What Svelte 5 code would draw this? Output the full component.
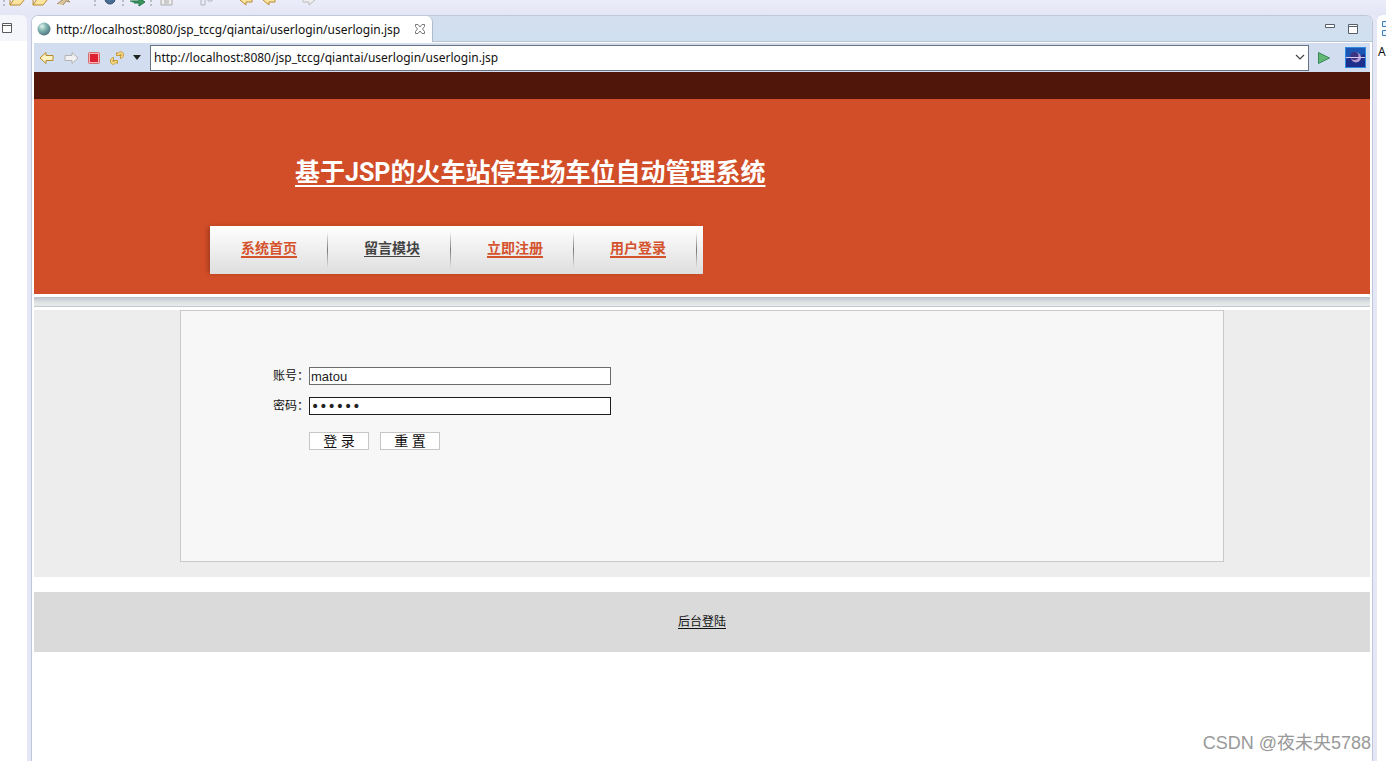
<script lang="ts">
  const pageUrl = 'http://localhost:8080/jsp_tccg/qiantai/userlogin/userlogin.jsp';

  const links = [
    { label: '系统首页', active: false },
    { label: '留言模块', active: true },
    { label: '立即注册', active: false },
    { label: '用户登录', active: false }
  ];

  let address = $state(pageUrl);
  let account = $state('matou');
  let password = $state('123456');

  function reset() {
    account = '';
    password = '';
  }
</script>

<div class="workbench">
  <div class="main-toolbar">
    <!-- the toolbar is scrolled up, so only the feet of its icons show -->
    <svg width="330" height="9" viewBox="0 0 330 9" aria-hidden="true">
      <g fill="#fbe3a0" stroke="#b98a2e">
        <path d="M10 -3V5H20L25 -1H14L10 5" />
        <path d="M33 -3V5H43L48 -1H37L33 5" />
        <path d="M246 -5L240 0L246 5V2H252V-2H246Z" />
        <path d="M269 -5L263 0L269 5V2H275V-2H269Z" />
      </g>
      <path d="M57 4L65 -2L70 2L66 1L63 5" fill="#dcc49a" stroke="#a48e68" />
      <circle cx="110" cy="-1" r="5" fill="#4a6f94" stroke="#2f4668" />
      <path d="M130 1H139V-2L145 2L139 6V3H134" fill="#38985c" stroke="#257549" />
      <path d="M161 -2V5H172V-2M164 1H169M164 3H169" fill="#eee" stroke="#aaa" />
      <path d="M201 -2V5H205V-2M208 -2V1H212V-2" fill="none" stroke="#b5b5bd" />
      <path d="M309 -5L315 0L309 5V2H303V-2H309Z" fill="#eee" stroke="#bbb" />
      <path d="M4 0V6M95 0V6M123 0V6M151 0V6" stroke="#8d8d99" stroke-dasharray="2 2" />
    </svg>
  </div>

  <div class="panes">
    <aside class="side left">
      <button type="button" class="icon-button" aria-label="Restore left view">
        <svg width="12" height="12" viewBox="0 0 12 12">
          <path d="M1.500 1.500H10.500V10.500H1.500ZM1.500 3.500H10.500" fill="#fff" stroke="#5b5b5b" />
        </svg>
      </button>
    </aside>

    <section class="editor">
      <div class="tab-strip">
        <div class="tab">
          <svg width="14" height="14" viewBox="0 0 14 14" aria-hidden="true">
            <defs>
              <radialGradient id="globe" cx="0.35" cy="0.3" r="0.75">
                <stop offset="0" stop-color="#e4f3ee" />
                <stop offset="0.45" stop-color="#80b4ae" />
                <stop offset="1" stop-color="#4f6f80" />
              </radialGradient>
            </defs>
            <circle cx="7" cy="7" r="6.500" fill="url(#globe)" />
          </svg>
          <span>{pageUrl}</span>
          <button type="button" class="icon-button" aria-label="Close tab">
            <svg width="12" height="12" viewBox="0 0 12 12">
              <path
                d="M1.500 1.500H4L6 4L8 1.500H10.500V3.500L8.500 6L10.500 8.500V10.500H8L6 8L4 10.500H1.500V8.500L3.500 6L1.500 3.500Z"
                fill="#fff"
                stroke="#777"
              />
            </svg>
          </button>
        </div>
        <div class="window-buttons">
          <button type="button" class="icon-button" aria-label="Minimize">
            <svg width="12" height="12" viewBox="0 0 12 12">
              <path d="M1.500 1.500H10.500V4.500H1.500Z" fill="#fff" stroke="#555f6b" />
            </svg>
          </button>
          <button type="button" class="icon-button" aria-label="Maximize">
            <svg width="12" height="12" viewBox="0 0 12 12">
              <path d="M1.500 1.500H10.500V10.500H1.500ZM1.500 3.500H10.500" fill="#fff" stroke="#555f6b" />
            </svg>
          </button>
        </div>
      </div>

      <div class="browser-bar">
        <div class="browser-tools">
          <button type="button" class="icon-button" aria-label="Back">
            <svg width="16" height="14" viewBox="0 0 16 14">
              <path d="M1 7L7 1.500V4.500H14V9.500H7V12.500Z" fill="#fff3c4" stroke="#b58a2a" />
            </svg>
          </button>
          <button type="button" class="icon-button" aria-label="Forward">
            <svg width="16" height="14" viewBox="0 0 16 14">
              <path d="M15 7L9 1.500V4.500H2V9.500H9V12.500Z" fill="#f1f1f1" stroke="#b4b4b4" />
            </svg>
          </button>
          <button type="button" class="icon-button" aria-label="Stop">
            <svg width="14" height="14" viewBox="0 0 14 14">
              <rect x="1.500" y="1.500" width="11" height="11" rx="1" fill="#f3b7b7" stroke="#d66a70" />
              <rect x="3" y="3" width="8" height="8" fill="#dd1f31" />
            </svg>
          </button>
          <button type="button" class="icon-button" aria-label="Refresh">
            <svg width="16" height="16" viewBox="0 0 16 16">
              <g fill="#fbdc84" stroke="#c29a40">
                <path d="M7.500 5.500V2.500L9 3.500C11 0.500 14.500 1.500 14.500 5C14.500 7 13 8.500 11.500 8.500V6.500C13 6 12.500 3.500 10.800 4.500L12 5.500Z" />
                <path d="M8.500 10.500V13.500L7 12.500C5 15.500 1.500 14.500 1.500 11C1.500 9 3 7.500 4.500 7.500V9.500C3 10 3.500 12.500 5.200 11.500L4 10.500Z" />
              </g>
            </svg>
          </button>
          <button type="button" class="icon-button" aria-label="Refresh options">
            <svg width="8" height="5" viewBox="0 0 8 5"><path d="M0 0H8L4 5Z" fill="#222" /></svg>
          </button>
        </div>
        <div class="address">
          <input type="text" aria-label="Address" bind:value={address} />
          <button type="button" class="icon-button" aria-label="Show history">
            <svg width="10" height="7" viewBox="0 0 10 7">
              <path d="M1 1L5 5L9 1" fill="none" stroke="#444" stroke-width="1.200" />
            </svg>
          </button>
        </div>
        <button type="button" class="icon-button" aria-label="Go">
          <svg width="14" height="14" viewBox="0 0 14 14">
            <path d="M1.500 1.500L12.500 7L1.500 12.500Z" fill="#62b873" stroke="#36895a" />
          </svg>
        </button>
        <svg class="brand" width="21" height="21" viewBox="0 0 21 21" aria-hidden="true">
          <rect width="21" height="21" fill="#2f8be0" />
          <rect x="1" y="1" width="19" height="19" fill="#1d55b4" />
          <path d="M1 20V12L20 7V20Z" fill="#1d2f8a" />
          <circle cx="11" cy="10.500" r="5" fill="#b49bd4" />
          <circle cx="9.500" cy="9" r="4" fill="#3c3480" />
          <path d="M1 10.500H20" stroke="#d9c8f0" />
        </svg>
      </div>

      <main class="site">
        <div class="top-band"></div>
        <header>
          <div class="container">
            <h1><a href="#home">基于JSP的火车站停车场车位自动管理系统</a></h1>
            <nav>
              {#each links as link (link.label)}
                <div class="nav-item">
                  <a href="#{link.label}" class:active={link.active}>{link.label}</a>
                </div>
              {/each}
            </nav>
          </div>
        </header>
        <div class="divider"></div>

        <div class="content">
          <div class="panel">
            <form onsubmit={(event) => event.preventDefault()}>
              <label for="account">账号：</label>
              <input id="account" type="text" bind:value={account} />
              <label for="password">密码：</label>
              <input id="password" type="password" bind:value={password} />
              <div class="actions">
                <button type="submit">登 录</button>
                <button type="button" onclick={reset}>重 置</button>
              </div>
            </form>
          </div>
        </div>

        <footer><a href="#admin">后台登陆</a></footer>
      </main>
    </section>

    <aside class="side right">
      <svg width="12" height="18" viewBox="0 0 12 18" aria-hidden="true">
        <path d="M1.500 1.500H6.500V6.500H1.500ZM1.500 10.500H6.500V15.500H1.500Z" fill="#e8f3fd" stroke="#3b7db8" />
      </svg>
      <span>A</span>
    </aside>
  </div>

  <div class="watermark">CSDN @夜未央5788</div>
</div>

<style>
  :global(body) {
    margin: 0;
    overflow: hidden;
  }

  .workbench {
    display: flex;
    flex-direction: column;
    min-height: 100vh;
    background: #e6e7f6;
    color: #111;
    font-family: 'Noto Sans', 'Noto Sans CJK SC', sans-serif;
    font-size: 12px;
  }

  .workbench *,
  .workbench {
    box-sizing: border-box;
  }

  svg {
    display: block;
    flex: none;
  }

  .main-toolbar {
    height: 15px;
    background: linear-gradient(#ececfa, #e4e6f5);
  }

  .icon-button {
    display: flex;
    align-items: center;
    justify-content: center;
    padding: 0;
    border: 0;
    background: none;
  }

  .panes {
    flex: 1;
    display: flex;
    gap: 4px;
  }

  .side {
    flex: none;
    background: #fff;
    white-space: nowrap;
  }

  .left {
    width: 27px;
    padding: 7px 0 0 1px;
    border-top-right-radius: 6px;
    background: linear-gradient(#f5f5fc 26px, #fff 26px);
  }

  .right {
    width: 9px;
    padding: 5px 0 0 1px;
    border-top-left-radius: 6px;
    line-height: 28px;
  }

  .right svg {
    margin-left: 3px;
  }

  .editor {
    flex: 1;
    min-width: 0;
    border: 1px solid #bfc8da;
    border-bottom: 0;
    border-radius: 7px 7px 0 0;
    background: #fff;
    overflow: hidden;
  }

  .tab-strip {
    display: flex;
    justify-content: space-between;
    height: 26px;
    border-bottom: 1px solid #b7c3d2;
    background: linear-gradient(#d3deee, #cfe0ef);
  }

  .tab {
    display: flex;
    align-items: center;
    gap: 5px;
    height: 26px;
    padding: 0 6px 0 5px;
    border-right: 1px solid #b0bccd;
    border-radius: 0 6px 0 0;
    background: #fff;
    white-space: nowrap;
  }

  .tab .icon-button {
    margin-left: 9px;
  }

  .window-buttons {
    display: flex;
    align-items: center;
    gap: 11px;
    padding-right: 13px;
  }

  .browser-bar {
    display: flex;
    align-items: center;
    gap: 8px;
    height: 30px;
    padding-right: 4px;
    margin: 0 2px;
    border-top: 1px solid #fff;
    background: #d2deef;
  }

  .browser-tools {
    display: flex;
    align-items: center;
    gap: 8px;
    width: 108px;
    padding-left: 5px;
  }

  .address {
    flex: 1;
    display: flex;
    height: 26px;
    padding: 0 3px;
    border: 1px solid #68737f;
    background: #fff;
  }

  .address input {
    flex: 1;
    min-width: 0;
    padding: 0;
    border: 0;
    outline: none;
    background: none;
    color: #111;
    font: inherit;
  }

  .brand {
    margin-left: 6px;
  }

  .site {
    margin: 0 2px;
    background: #fff;
  }

  .top-band {
    height: 27px;
    background: #50160a;
  }

  header {
    padding: 53px 0 20px;
    background: #d14e28;
  }

  .container {
    max-width: 984px;
    margin: 0 auto;
  }

  h1 {
    margin: 0 0 32px;
    padding-left: 85px;
    font-family: Roboto, 'Noto Sans CJK SC', sans-serif;
    font-size: 25px;
    line-height: 42px;
  }

  h1 a {
    color: #fff;
    text-underline-offset: 4px;
    text-decoration-thickness: 2px;
  }

  nav {
    display: flex;
    width: max-content;
    height: 48px;
    padding-right: 6px;
    background: linear-gradient(#fff, #dedede);
    box-shadow: -3px 0 4px -1px rgba(80, 22, 10, 0.35);
  }

  .nav-item {
    padding: 0 31px 0 36px;
    background: linear-gradient(transparent, #777 50%, transparent) right center / 1px 36px no-repeat;
    font-size: 14px;
    font-weight: 700;
    line-height: 44px;
  }

  .nav-item:first-child {
    padding-left: 31px;
  }

  .nav-item a {
    color: #d4532d;
    text-underline-offset: 3px;
    text-decoration-thickness: 2px;
  }

  .nav-item a.active {
    color: #444;
    text-decoration-thickness: 1px;
  }

  .divider {
    height: 12px;
    margin: 1px 0 3px;
    border-top: 2px solid #fff;
    border-bottom: 1px solid #c5c9cb;
    background: linear-gradient(#b9c2cb, #dfe3e3 60%, #e6ebeb);
  }

  .content {
    padding-bottom: 15px;
    background: #ededed;
  }

  .panel {
    max-width: 1044px;
    min-height: 252px;
    margin: 0 auto;
    padding: 56px 92px;
    border: 1px solid #c8caca;
    background: #f7f7f7;
  }

  form {
    display: grid;
    grid-template-columns: 36px 302px;
    gap: 12px 0;
    align-items: center;
  }

  label {
    line-height: 18px;
    white-space: nowrap;
  }

  form input {
    width: 100%;
    height: 18px;
    padding: 0 1px;
    border: 1px solid #6c6c6c;
    outline: none;
    background: #fff;
    color: #222;
    font-family: 'Liberation Sans', sans-serif;
    font-size: 13px;
  }

  form input[type='password'] {
    border-color: #1c1c1c;
    font-family: 'DejaVu Sans', sans-serif;
    font-size: 14px;
  }

  .actions {
    grid-column: 2;
    display: flex;
    gap: 11px;
    padding-top: 5px;
  }

  .actions button {
    width: 60px;
    height: 18px;
    padding: 0;
    border: 1px solid #c6c6c6;
    background: #fff;
    color: #111;
    font-family: inherit;
    font-size: 14px;
    line-height: 16px;
  }

  footer {
    margin-top: 15px;
    background: #dadada;
    line-height: 60px;
    text-align: center;
  }

  footer a {
    color: #111;
    text-underline-offset: 2px;
  }

  .watermark {
    position: absolute;
    right: 15px;
    bottom: 6px;
    color: #999;
    font-family: 'Liberation Sans', 'Noto Sans CJK SC', sans-serif;
    font-size: 18px;
    line-height: 24px;
  }
</style>
